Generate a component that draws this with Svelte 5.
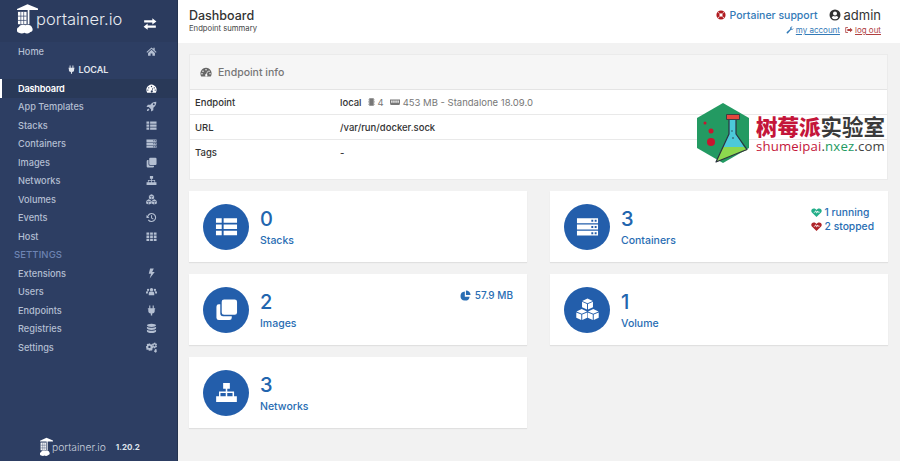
<script>
	const icons = {
		home: '<path d="M12 3 1 13l1.500 1.600L12 6.200l9.500 8.400L23 13l-4-3.600V4h-3v2.700z"/><path d="M4.500 15 12 8.400l7.500 6.600v6.500h-5.500v-5h-4v5H4.500z"/>',
		dash: '<path fill-rule="evenodd" d="M12 3.500a11.500 11.500 0 0 0-9.500 17.500h19A11.500 11.500 0 0 0 12 3.500zM12 6a1.500 1.500 0 1 1 0 3 1.500 1.500 0 0 1 0-3zM6 9a1.500 1.500 0 1 1 0 3 1.500 1.500 0 0 1 0-3zM18 9a1.500 1.500 0 1 1 0 3 1.500 1.500 0 0 1 0-3zM4 14a1.500 1.500 0 1 1 0 3 1.500 1.500 0 0 1 0-3zM20 14a1.500 1.500 0 1 1 0 3 1.500 1.500 0 0 1 0-3zM14.500 10.500l1.300.5-2 5.500a2.200 2.200 0 1 1-1.400-.4z"/>',
		rocket: '<path fill-rule="evenodd" d="M22.500 1.500c-6 0-10 2-13 6.500H4l-3 5h5l5 5v5l5-3v-5.500c4.500-3 6.500-7 6.500-12.500zM17 5a2 2 0 1 1 0 4 2 2 0 0 1 0-4z"/><path d="M5 16.500c-2 1-3 3.500-3 5.500 2 0 4.500-1 5.500-3z"/>',
		list: '<path d="M1 3.500h6v4.500H1zM9 3.500h14v4.500H9zM1 10h6v4.500H1zM9 10h14v4.500H9zM1 16.500h6V21H1zM9 16.500h14V21H9z"/>',
		server: '<path fill-rule="evenodd" d="M1 3.500h22v5H1zM1 10h22v5H1zM1 16.500h22v5H1zM16 5v2h2V5zM19.500 5v2h2V5zM16 11.500v2h2v-2zM19.500 11.500v2h2v-2zM16 18v2h2v-2zM19.500 18v2h2v-2z"/>',
		clone: '<path d="M9.500 1.500h11a2.500 2.500 0 0 1 2.500 2.500v11a2.500 2.500 0 0 1-2.500 2.500h-11A2.500 2.500 0 0 1 7 15V4a2.500 2.500 0 0 1 2.500-2.500z"/><path d="M5.500 6.500V16A3 3 0 0 0 8.500 19h9v1.500A2.500 2.500 0 0 1 15 23H4a2.500 2.500 0 0 1-2.500-2.500V9A2.500 2.500 0 0 1 4 6.500z"/>',
		sitemap: '<path d="M8.500 2h7v6h-2.700v3h7.100v5h2.900v6h-7.500v-6h3v-3.400h-5.500V16h3v6H8.200v-6h3v-3.400H5.700V16h2.900v6H1.200v-6h3v-5h7V8H8.500z"/>',
		cubes: '<path d="M12 .5l5.500 2.500L12 5.500 6.500 3zM6.300 4l5.200 2.300V12L6.300 9.700zM17.700 4v5.700L12.500 12V6.300zM6 11.500l5.500 2.500L6 16.500.5 14zM.3 15l5.200 2.300V23L.3 20.700zM11.700 15v5.700L6.500 23v-5.700zM18 11.500l5.500 2.500-5.500 2.500-5.500-2.500zM12.300 15l5.200 2.300V23l-5.200-2.300zM23.700 15v5.700L18.500 23v-5.700z"/>',
		history: '<path d="M12 2a10 10 0 1 1-8 16l2-1.700A7.500 7.500 0 1 0 4.900 10.500L7.500 13H1V6.500l2 2A10 10 0 0 1 12 2z"/><path d="M11 7h2.200v5.500l3.500 2.400-1.200 1.700-4.500-3.200z"/>',
		grid: '<path d="M1 3h6v5H1zM9 3h6v5H9zM17 3h6v5h-6zM1 10h6v5H1zM9 10h6v5H9zM17 10h6v5h-6zM1 17h6v5H1zM9 17h6v5H9zM17 17h6v5h-6z"/>',
		bolt: '<path d="M9 1h8l-3.500 7.500H19L8 23l3-10.500H6z"/>',
		users: '<circle cx="12" cy="8" r="3.700"/><circle cx="4.500" cy="8.500" r="2.500"/><circle cx="19.500" cy="8.500" r="2.500"/><path d="M6 20v-3.500c0-3 2-4.500 3.500-4.500h5c1.500 0 3.500 1.500 3.500 4.500V20z"/><path d="M0 16.500V14c0-2 1-2.800 2.500-2.800h3c-1 1-1.500 2.600-1.500 5.300zM24 16.500V14c0-2-1-2.800-2.500-2.800h-3c1 1 1.500 2.600 1.500 5.300z"/>',
		plug: '<path d="M7 1h2.500v6h5V1H17v6h3v2.500h-1V13c0 3-2 5-5.500 5.500V23h-3v-4.500C7 18 5 16 5 13V9.500H4V7h3z"/>',
		db: '<path d="M12 1.500c5.500 0 10 1.600 10 3.500s-4.500 3.500-10 3.500S2 6.900 2 5s4.500-3.500 10-3.500z"/><path d="M2 8c2 1.700 6 2.500 10 2.500S20 9.700 22 8v3.500c0 1.900-4.500 3.500-10 3.500S2 13.400 2 11.500z"/><path d="M2 14.500c2 1.700 6 2.500 10 2.500s8-.8 10-2.500V18c0 2.500-4.500 4-10 4S2 20.500 2 18z"/>',
		cogs: '<path fill-rule="evenodd" d="M7 6h3.500l.6 2 2 .9 1.900-1 2.200 2.500-1.200 1.800.7 2 2 .6v3.400l-2 .5-.7 2 1 1.800-2.300 2.300-1.800-1-2 .7H7l-.5-2-2-.8-1.800 1-2.300-2.400 1-1.700-.7-2L0 16.800v-3.400l2-.6.700-2-1-1.800L4 6.700l1.800 1 1-.6zM8.800 12a3 3 0 1 0 0 6 3 3 0 0 0 0-6z" transform="translate(0 -2) scale(.85)"/><path fill-rule="evenodd" d="M19 1l1.500.5.3 1.500 1.500.6L23.500 3l.5 3-1.300.8v1.500L24 9l-.8 2.500-1.500-.3-1.200 1-.5 1.500-2.500-.3-.5-1.500-1.500-.7-1.300.7L13 9.500l1.200-1V7L13 6l1-2.500 1.500.3 1.200-.9zM18.500 5.500a2 2 0 1 0 0 4 2 2 0 0 0 0-4z"/><path d="M20 15l3.500 1.500-.5 3 .7 2-2.700 2-2-1.500L17.500 21l1-2.500z"/>',
		pie: '<path d="M10.500 3A10 10 0 1 0 21 14.500H10.500z"/><path d="M13 1a10 10 0 0 1 10 10H13z"/>',
		heart: '<path fill-rule="evenodd" d="M12 22 2 12C-1 8.500 1 3 6 3c3 0 5 1.500 6 3.500C13 4.500 15 3 18 3c5 0 7 5.500 4 9zM7 10.500 5.500 12H9l1.500-2 2 4 2-3 1 1H19v-1.500h-2.500L14.500 8l-2 3-2-4-2 3.500z"/>',
		chip: '<path d="M6 2h12v20H6z"/><path d="M3.500 5H5v2H3.500zM3.500 9H5v2H3.500zM3.500 13H5v2H3.500zM3.500 17H5v2H3.500zM19 5h1.500v2H19zM19 9h1.500v2H19zM19 13h1.500v2H19zM19 17h1.500v2H19z"/>',
		ram: '<path fill-rule="evenodd" d="M0 6h24v10h-1v3H1v-3H0zM3 8.500v5h3v-5zM8 8.500v5h3v-5zM13 8.500v5h3v-5zM18 8.500v5h3v-5z"/>',
		life: '<path fill-rule="evenodd" d="M12 1a11 11 0 1 0 0 22 11 11 0 0 0 0-22zM12 8a4 4 0 1 1 0 8 4 4 0 0 1 0-8zM5.500 4.500 9 8 8 9 4.500 5.500zM18.500 4.500l1 1L16 9l-1-1zM8 15l1 1-3.500 3.500-1-1zM16 15l3.500 3.500-1 1L15 16z"/>',
		user: '<path fill-rule="evenodd" d="M12 1a11 11 0 1 0 0 22 11 11 0 0 0 0-22zM12 5a4 4 0 1 1 0 8 4 4 0 0 1 0-8zM12 20.500a8.500 8.500 0 0 1-6.500-3c.5-2 2-3.500 3.500-3.500 1 .5 2 .8 3 .8s2-.3 3-.8c1.500 0 3 1.500 3.500 3.500a8.500 8.500 0 0 1-6.500 3z"/>',
		wrench: '<path d="M22.500 6c0 4-4 6.500-7.500 5.200L6 21.500c-1 1-2.600 1-3.600 0s-1-2.500 0-3.500L12.700 9C11.500 5.500 14 1.500 18 1.500c.7 0 1.300.1 1.800.3L16 5.500l.7 2.800 2.800.7 3-3z"/>',
		out: '<path d="M9 3H3a2 2 0 0 0-2 2v14a2 2 0 0 0 2 2h6v-2.500H3.500v-13H9z"/><path d="M15 5.500 23 12l-8 6.500V15H7V9h8z"/>',
		swap: '<path d="M16 2l7 5.500L16 13V9.500H2v-4h14zM8 11v3.500h14v4H8V22l-7-5.500z"/>'
	};

	const primary = [
		{ label: 'Dashboard', icon: 'dash', active: true },
		{ label: 'App Templates', icon: 'rocket' },
		{ label: 'Stacks', icon: 'list' },
		{ label: 'Containers', icon: 'server' },
		{ label: 'Images', icon: 'clone' },
		{ label: 'Networks', icon: 'sitemap' },
		{ label: 'Volumes', icon: 'cubes' },
		{ label: 'Events', icon: 'history' },
		{ label: 'Host', icon: 'grid' }
	];
	const settings = [
		{ label: 'Extensions', icon: 'bolt' },
		{ label: 'Users', icon: 'users' },
		{ label: 'Endpoints', icon: 'plug' },
		{ label: 'Registries', icon: 'db' },
		{ label: 'Settings', icon: 'cogs' }
	];
</script>

{#snippet icon(name, cls = '')}
	<svg class={'ico ' + cls} viewBox="0 0 24 24" fill="currentColor" aria-hidden="true">{@html icons[name]}</svg>
{/snippet}

{#snippet crane(cls)}
	<svg class={cls} viewBox="0 0 22 31" fill="#fff" aria-hidden="true">
		<path d="M0 5 11 0l11 4.500V6H13v15h-1.800V6H0z" />
		<path d="M1 8h9v13H1z" />
		<path d="M4 8v13M7 8v13M1 12.500h9M1 17h9" stroke="#2d3e63" stroke-width=".7" />
		<path d="M2 30c-3-1-3-5 0-6 1-3 5-3 7-2 3-1 6 0 7 3 1 2 0 4-2 4-2 2-5 2-6 1-2 1-4 1-6 0z" />
	</svg>
{/snippet}

{#snippet navItem(item)}
	<div class="nav-item" class:active={item.active}>
		<span>{item.label}</span>
		{@render icon(item.icon, 'nav-ico')}
	</div>
{/snippet}

{#snippet tile(name, value, label)}
	<div class="tile-icon">{@render icon(name)}</div>
	<div class="tile-text">
		<div class="tile-value">{value}</div>
		<div class="tile-label">{label}</div>
	</div>
{/snippet}

<div class="page">
	<aside class="sidebar">
		<div class="brand">
			<div class="logo">
				{@render crane('crane')}
				<span>portainer.io</span>
			</div>
			{@render icon('swap', 'swap')}
		</div>
		<nav class="nav">
			<div class="nav-item"><span>Home</span>{@render icon('home', 'nav-ico')}</div>
			<div class="endpoint-name">{@render icon('plug', 'plug')} LOCAL</div>
			{#each primary as item}
				{@render navItem(item)}
			{/each}
			<div class="nav-title">SETTINGS</div>
			{#each settings as item}
				{@render navItem(item)}
			{/each}
		</nav>
		<div class="foot">
			{@render crane('crane small')}
			<span class="foot-name">portainer.io</span>
			<span class="foot-version">1.20.2</span>
		</div>
	</aside>

	<main class="main">
		<header class="topbar">
			<div>
				<div class="title">Dashboard</div>
				<div class="subtitle">Endpoint summary</div>
			</div>
			<div class="user">
				<div class="user-top">
					{@render icon('life', 'life')}
					<span class="support">Portainer support</span>
					{@render icon('user', 'avatar')}
					<span class="admin">admin</span>
				</div>
				<div class="user-links">
					<span class="account">{@render icon('wrench', 'tiny')}<u>my account</u></span>
					<span class="logout">{@render icon('out', 'tiny')}<u>log out</u></span>
				</div>
			</div>
		</header>

		<div class="content">
			<section class="info">
				<div class="info-head">{@render icon('dash', 'head-ico')} Endpoint info</div>
				<div class="info-row">
					<div class="info-key">Endpoint</div>
					<div class="info-val">
						<span>local</span>
						<span class="muted">{@render icon('chip', 'meta')} 4</span>
						<span class="muted">{@render icon('ram', 'meta wide')} 453 MB - Standalone 18.09.0</span>
					</div>
				</div>
				<div class="info-row">
					<div class="info-key">URL</div>
					<div class="info-val">/var/run/docker.sock</div>
				</div>
				<div class="info-row last">
					<div class="info-key">Tags</div>
					<div class="info-val">-</div>
				</div>
			</section>

			<div class="tiles">
				<div class="tile">{@render tile('list', 0, 'Stacks')}</div>
				<div class="tile">
					{@render tile('server', 3, 'Containers')}
					<div class="tile-side">
						<div>{@render icon('heart', 'heart green')} 1 running</div>
						<div>{@render icon('heart', 'heart red')} 2 stopped</div>
					</div>
				</div>
				<div class="tile">
					{@render tile('clone', 2, 'Images')}
					<div class="tile-side single">{@render icon('pie', 'pie')} 57.9 MB</div>
				</div>
				<div class="tile">{@render tile('cubes', 1, 'Volume')}</div>
				<div class="tile">{@render tile('sitemap', 3, 'Networks')}</div>
			</div>
		</div>
	</main>

	<div class="stamp">
		<svg class="stamp-hex" viewBox="0 0 52 60" aria-hidden="true">
			<path d="M26 0 52 15v30L26 60 0 45V15z" fill="#239a62" />
			<path d="M32 17h7v14l8 13H25.700l6.300-13z" fill="#4cc9d9" />
			<path d="M25.700 44h21.300l3 3-31 12z" fill="#8cd84e" />
			<path d="M32 17v14L19 59l31-12.500L39 31V17" fill="none" stroke="#2b3240" stroke-width="1.200" stroke-linejoin="round" />
			<path d="M29.500 11.500h13v5h-13z" fill="#e4483e" stroke="#2b3240" stroke-width=".8" />
			<circle cx="8" cy="20" r="1.500" fill="#c9152f" />
			<circle cx="14" cy="28" r="2.500" fill="#c9152f" />
			<circle cx="14" cy="39" r="4" fill="#c9152f" />
			<circle cx="35" cy="28" r=".7" fill="#2b3240" />
			<circle cx="36" cy="35" r=".8" fill="#2b3240" />
		</svg>
		<div class="stamp-text">
			<div class="stamp-cn"><b>树莓派</b><span>实验室</span></div>
			<div class="stamp-url"><b>shumeipai</b>.<i>nxez</i>.com</div>
		</div>
	</div>
</div>

<style>
	:global(body) {
		margin: 0;
		font-family: Inter, "Liberation Sans", sans-serif;
		background: #f2f2f2;
	}

	.page {
		display: flex;
		height: 461px;
		width: 900px;
		overflow: hidden;
		position: relative;
	}

	.ico {
		display: inline-block;
		flex: none;
	}

	.sidebar {
		width: 177px;
		flex: none;
		display: flex;
		flex-direction: column;
		background: #2d3e63;
		border-right: 1px solid #24334f;
		color: #b4bfd2;
		font-weight: 500;
	}

	.brand {
		height: 42px;
		box-sizing: border-box;
		display: flex;
		align-items: flex-start;
		justify-content: space-between;
		padding: 4px 20px 0 17px;
		background: #2b3b5e;
	}

	.logo {
		display: flex;
		align-items: flex-start;
		gap: 1px;
		color: #e8ebf1;
		font-size: 16.500px;
		font-weight: 300;
		line-height: 18px;
	}

	.logo span {
		margin-top: 6px;
	}

	.crane {
		width: 21px;
		height: 30px;
		margin-right: -3px;
	}

	.crane.small {
		width: 13px;
		height: 20px;
		margin-right: -1px;
	}

	.swap {
		width: 14px;
		height: 14px;
		margin-top: 13px;
		color: #fff;
	}

	.nav {
		font-size: 9.200px;
	}

	.nav-item {
		height: 18.500px;
		display: flex;
		align-items: center;
		justify-content: space-between;
		padding: 0 20px 0 18px;
	}

	.nav-item.active {
		color: #fff;
		font-weight: 600;
		letter-spacing: -0.2px;
		background: #293958;
		box-shadow: inset 2px 0 0 #fff;
	}

	.nav-ico {
		width: 11px;
		height: 11px;
	}

	.endpoint-name {
		height: 18.500px;
		display: flex;
		align-items: center;
		justify-content: center;
		gap: 3px;
		color: #e1e6ee;
		font-weight: 600;
		font-size: 9px;
		padding-right: 2px;
	}

	.plug {
		width: 9px;
		height: 9px;
	}

	.nav-title {
		height: 18.500px;
		display: flex;
		align-items: center;
		padding-left: 14px;
		font-size: 9.500px;
		letter-spacing: 0.1px;
		color: #6d84b3;
	}

	.foot {
		margin-top: auto;
		display: flex;
		align-items: center;
		padding: 0 0 4px 40px;
		color: #c9d0dd;
		font-size: 10.300px;
		font-weight: 300;
	}

	.foot-version {
		margin-left: 10px;
		font-size: 8px;
		font-weight: 700;
		color: #dfe4ec;
	}

	.main {
		flex: 1;
		display: flex;
		flex-direction: column;
		min-width: 0;
	}

	.topbar {
		height: 43px;
		display: flex;
		justify-content: space-between;
		padding: 8px 19px 0 11px;
		box-sizing: border-box;
		background: #fff;
	}

	.title {
		font-size: 12.500px;
		line-height: 15px;
		color: #333;
		font-weight: 500;
	}

	.subtitle {
		font-size: 7.700px;
		line-height: 12px;
		color: #444;
	}

	.user {
		display: flex;
		flex-direction: column;
		align-items: flex-end;
	}

	.user-top {
		display: flex;
		align-items: center;
		height: 14px;
		font-size: 10.500px;
	}

	.life {
		width: 10px;
		height: 10px;
		color: #b01a1f;
		margin-right: 4px;
	}

	.support {
		color: #337ab7;
		font-weight: 500;
	}

	.avatar {
		width: 12px;
		height: 12px;
		color: #333;
		margin: 0 3px 0 11px;
	}

	.admin {
		color: #333;
		font-size: 13px;
	}

	.user-links {
		display: flex;
		gap: 5px;
		font-size: 8px;
		line-height: 14px;
		margin-top: 1px;
	}

	.tiny {
		width: 8px;
		height: 8px;
		margin-right: 2px;
		vertical-align: -1px;
	}

	.account {
		color: #337ab7;
	}

	.logout {
		color: #b0403f;
	}

	.content {
		flex: 1;
		padding: 11px 12px 0 11px;
		background: #f2f2f2;
		display: flex;
		flex-direction: column;
		gap: 11px;
	}

	.info {
		height: 126px;
		box-sizing: border-box;
		background: #fff;
		border: 1px solid #ebebeb;
		font-size: 9.500px;
		color: #333;
	}

	.info-head {
		height: 34px;
		display: flex;
		align-items: center;
		gap: 6px;
		padding-left: 10px;
		background: #f6f6f6;
		border-bottom: 1px solid #e4e4e4;
		color: #767676;
		font-size: 10.500px;
		font-weight: 500;
	}

	.head-ico {
		width: 12px;
		height: 12px;
		color: #666;
	}

	.info-row {
		height: 24px;
		display: flex;
		align-items: center;
		padding-left: 5px;
		border-bottom: 1px solid #e9e9e9;
		font-weight: 500;
	}

	.info-row.last {
		border-bottom: none;
	}

	.info-key {
		width: 145px;
	}

	.info-val {
		display: flex;
		align-items: center;
		gap: 5px;
	}

	.muted {
		color: #777;
		font-weight: 400;
		display: inline-flex;
		align-items: center;
		gap: 2px;
	}

	.meta {
		width: 9px;
		height: 10px;
		color: #777;
	}

	.meta.wide {
		width: 12px;
	}

	.tiles {
		display: grid;
		grid-template-columns: 338px 338px;
		column-gap: 23px;
		row-gap: 12px;
	}

	.tile {
		height: 71px;
		box-sizing: border-box;
		display: flex;
		align-items: center;
		padding: 0 14px;
		background: #fff;
		box-shadow: 0 1px 1px #e0e0e0;
		color: #286db3;
		position: relative;
	}

	.tile-icon {
		width: 46px;
		height: 46px;
		border-radius: 50%;
		background: #235eab;
		display: flex;
		align-items: center;
		justify-content: center;
		color: #fff;
		flex: none;
	}

	.tile-icon .ico {
		width: 23px;
		height: 23px;
	}

	.tile-text {
		margin-left: 11px;
	}

	.tile-value {
		font-size: 20px;
		line-height: 24px;
		font-weight: 500;
		color: #2265ae;
	}

	.tile-label {
		font-size: 10.500px;
		line-height: 13px;
		margin-top: 3px;
		font-weight: 500;
	}

	.tile-side {
		margin-left: auto;
		align-self: flex-start;
		margin-top: 14px;
		font-size: 10.300px;
		line-height: 14px;
		font-weight: 500;
	}

	.tile-side.single {
		margin-top: 14px;
		display: flex;
		align-items: center;
		gap: 4px;
		font-size: 10px;
	}

	.heart {
		width: 11px;
		height: 11px;
		vertical-align: -2px;
	}

	.heart.green {
		color: #23ae89;
	}

	.heart.red {
		color: #ae2328;
	}

	.pie {
		width: 11px;
		height: 11px;
	}

	.stamp {
		position: absolute;
		left: 697px;
		top: 103px;
		display: flex;
		gap: 7px;
	}

	.stamp-hex {
		width: 52px;
		height: 60px;
		overflow: visible;
	}

	.stamp-text {
		padding-top: 10px;
	}

	.stamp-cn {
		font-family: "Noto Sans CJK SC", sans-serif;
		font-weight: 700;
		font-size: 21.500px;
		line-height: 26px;
		color: #3a3a3a;
		white-space: nowrap;
	}

	.stamp-cn b {
		color: #c4163a;
	}

	.stamp-url {
		font-family: "Open Sans", sans-serif;
		font-size: 13.200px;
		line-height: 15px;
		letter-spacing: 0.15px;
		color: #444;
		white-space: nowrap;
	}

	.stamp-url b {
		font-weight: 400;
		color: #c4163a;
	}

	.stamp-url i {
		font-style: normal;
		color: #239a62;
	}
</style>
